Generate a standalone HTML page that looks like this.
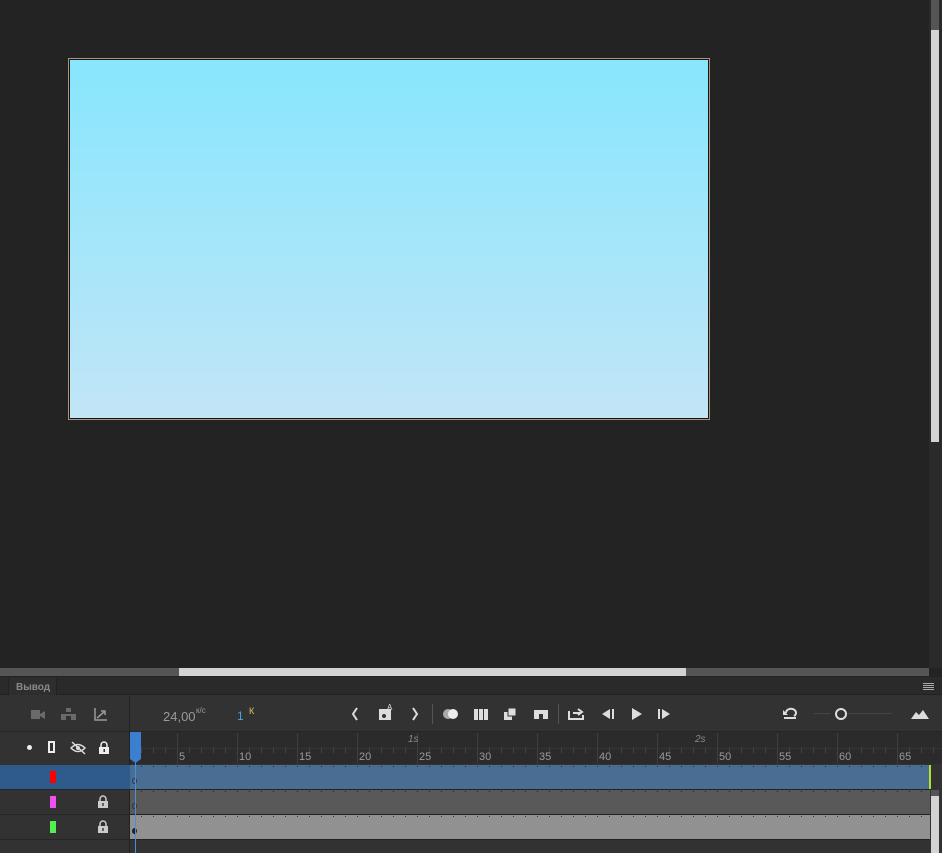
<!DOCTYPE html>
<html><head><meta charset="utf-8"><style>
*{margin:0;padding:0;box-sizing:border-box}
body{width:942px;height:853px;background:#232323;position:relative;overflow:hidden;font-family:"Liberation Sans","DejaVu Sans",sans-serif}
.a{position:absolute}
.lbl{position:absolute;top:751px;font-size:11px;color:#9a9a9a}
.ic{position:absolute}
</style></head><body>
<div class="a" style="left:68px;top:58px;width:642px;height:362px;border:1px solid #a89482;background:#1a1410"></div>
<div class="a" style="left:70px;top:60px;width:638px;height:358px;background:linear-gradient(#87e6fd,#c2e5f7)"></div>
<div class="a" style="left:929px;top:0;width:13px;height:668px;background:#2a2a2a"></div>
<div class="a" style="left:931px;top:0;width:8px;height:30px;background:#555"></div>
<div class="a" style="left:931px;top:30px;width:8px;height:412px;background:#d3d3d3"></div>
<div class="a" style="left:0;top:668px;width:929px;height:8px;background:#555"></div>
<div class="a" style="left:179px;top:668px;width:507px;height:8px;background:#d3d3d3"></div>
<div class="a" style="left:0;top:677px;width:942px;height:176px;background:#323232"></div>
<div class="a" style="left:0;top:677px;width:942px;height:18px;background:#2a2a2a;border-bottom:1px solid #222"></div>
<div class="a" style="left:8px;top:678px;width:49px;height:17px;background:#2e2e2e;border-left:1px solid #222;border-right:1px solid #222;font-size:10px;color:#8a8a8a;padding:4px 0 0 7px;font-weight:bold">Вывод</div>
<div class="a" style="left:923px;top:683px;width:11px;height:7px;background:repeating-linear-gradient(#aaa 0 1px,transparent 1px 2px)"></div>
<div class="a" style="left:129px;top:696px;width:1px;height:157px;background:#222"></div>
<div class="a" style="left:0;top:731px;width:942px;height:1px;background:#262626"></div>
<svg class="ic" style="left:28px;top:706px" width="90" height="18" viewBox="0 0 90 18">
<rect x="3" y="4" width="9" height="9" fill="#6a6a6a"/><path d="M12 8l5-3v8l-5-3z" fill="#6a6a6a"/>
<rect x="38" y="2" width="5" height="4" fill="#6a6a6a"/><rect x="33" y="8" width="15" height="2" fill="#6a6a6a"/><rect x="33" y="10" width="5" height="4" fill="#6a6a6a"/><rect x="43" y="10" width="5" height="4" fill="#6a6a6a"/>
<path d="M67 2v12h12" stroke="#9a9a9a" fill="none" stroke-width="1.5"/><path d="M69 12l7-6M73 5h4v4" stroke="#9a9a9a" fill="none" stroke-width="1.5"/>
</svg>
<div class="a" style="left:163px;top:709px;font-size:13px;color:#9a9a9a">24,00</div>
<div class="a" style="left:196px;top:706px;font-size:8px;color:#9a9a9a">к/с</div>
<div class="a" style="left:237px;top:709px;font-size:12px;color:#4ea0e0">1</div>
<div class="a" style="left:249px;top:706px;font-size:9px;color:#e8c15a">К</div>
<svg class="ic" style="left:340px;top:700px" width="600" height="28" viewBox="0 0 600 28">
<g stroke="#ddd" stroke-width="2" fill="none"><path d="M17 8l-4 6 4 6"/><path d="M73 8l4 6-4 6"/></g>
<rect x="39" y="9" width="12" height="11" fill="#ddd"/><circle cx="44" cy="16" r="2" fill="#333"/><text x="47" y="10" font-size="8" fill="#ddd" font-family="Liberation Sans">A</text>
<rect x="92" y="4" width="1" height="20" fill="#555"/>
<circle cx="108" cy="14" r="5" fill="#aaa"/><circle cx="113" cy="14" r="5" fill="#eee"/>
<rect x="134" y="9" width="4" height="11" fill="#ddd"/><rect x="139" y="9" width="4" height="11" fill="#ddd"/><rect x="144" y="9" width="4" height="11" fill="#ddd"/>
<rect x="164" y="12" width="8" height="8" fill="#ddd"/><rect x="168" y="8" width="8" height="8" fill="#ddd" stroke="#333"/>
<rect x="194" y="10" width="14" height="9" fill="#ddd"/><rect x="199" y="14" width="4" height="5" fill="#333"/>
<rect x="218" y="4" width="1" height="20" fill="#555"/>
<path d="M229 11v8h14v-4" stroke="#ddd" stroke-width="2" fill="none"/><path d="M233 13h8M238 9l4 3-4 3" stroke="#ddd" stroke-width="2" fill="none"/>
<path d="M270 9l-8 5 8 5z" fill="#ddd"/><rect x="272" y="9" width="2" height="10" fill="#ddd"/>
<path d="M292 8l10 6-10 6z" fill="#ddd"/>
<rect x="318" y="9" width="2" height="10" fill="#ddd"/><path d="M322 9l8 5-8 5z" fill="#ddd"/>
<path d="M444 18h12M446 13a5 4 0 1 1 8 3" stroke="#ddd" stroke-width="2" fill="none"/><path d="M443 10v5h5z" fill="#ddd"/>
<rect x="474" y="13" width="16" height="1" fill="#444"/><rect x="507" y="13" width="45" height="1" fill="#444"/>
<circle cx="501" cy="14" r="5" stroke="#ddd" stroke-width="2" fill="none"/>
<path d="M571 19l5-7 3 3 4-5 6 9z" fill="#ddd"/>
</svg>
<div class="a" style="left:27px;top:745px;width:5px;height:5px;border-radius:50%;background:#eee"></div>
<div class="a" style="left:48px;top:741px;width:7px;height:12px;border:2px solid #eee"></div>
<svg class="ic" style="left:70px;top:740px" width="44" height="16" viewBox="0 0 44 16">
<path d="M1 8q7-7 14 0q-7 7-14 0z" stroke="#ddd" stroke-width="1.5" fill="none"/><circle cx="8" cy="8" r="2" fill="#ddd"/><path d="M2 2l13 12" stroke="#ddd" stroke-width="1.5"/>
<path d="M31 7v-2a3 3 0 0 1 6 0v2" stroke="#eee" stroke-width="1.5" fill="none"/><rect x="29" y="7" width="10" height="7" fill="#eee"/><rect x="33.5" y="9" width="1.5" height="3" fill="#333"/>
</svg>
<div class="a" style="left:130px;top:732px;width:812px;height:32px;background:#2b2b2b"></div>
<div class="a" style="left:177px;top:733px;width:765px;height:31px;background:repeating-linear-gradient(90deg,#3e3e3e 0 1px,transparent 1px 60px)"></div>
<div class="a" style="left:141px;top:747px;width:801px;height:6px;background:repeating-linear-gradient(90deg,#444 0 1px,transparent 1px 12px)"></div>
<div class="a" style="left:130px;top:748px;width:812px;height:1px;background:#333"></div>
<div class="lbl" style="left:179px">5</div><div class="lbl" style="left:239px">10</div><div class="lbl" style="left:299px">15</div><div class="lbl" style="left:359px">20</div><div class="lbl" style="left:419px">25</div><div class="lbl" style="left:479px">30</div><div class="lbl" style="left:539px">35</div><div class="lbl" style="left:599px">40</div><div class="lbl" style="left:659px">45</div><div class="lbl" style="left:719px">50</div><div class="lbl" style="left:779px">55</div><div class="lbl" style="left:839px">60</div><div class="lbl" style="left:899px">65</div>
<div class="a" style="left:408px;top:734px;font-size:10px;font-style:italic;color:#888">1s</div>
<div class="a" style="left:695px;top:734px;font-size:10px;font-style:italic;color:#888">2s</div>
<div class="a" style="left:0;top:765px;width:130px;height:24px;background:#2e5b8c"></div>
<div class="a" style="left:130px;top:765px;width:800px;height:24px;background:#4a6d94"></div>
<div class="a" style="left:929px;top:765px;width:2px;height:24px;background:#b0e030"></div>
<div class="a" style="left:130px;top:789px;width:800px;height:1px;background:#222"></div>
<div class="a" style="left:130px;top:790px;width:800px;height:24px;background:#595959"></div>
<div class="a" style="left:130px;top:814px;width:800px;height:1px;background:#222"></div>
<div class="a" style="left:130px;top:815px;width:800px;height:24px;background:#919191"></div>
<div class="a" style="left:130px;top:839px;width:800px;height:1px;background:#222"></div>
<div class="a" style="left:0;top:789px;width:130px;height:1px;background:#262626"></div>
<div class="a" style="left:0;top:814px;width:130px;height:1px;background:#262626"></div>
<div class="a" style="left:0;top:839px;width:130px;height:1px;background:#262626"></div>
<div class="a" style="left:141px;top:766px;width:789px;height:1px;background:repeating-linear-gradient(90deg,#1e2e44 0 1px,transparent 1px 12px)"></div>
<div class="a" style="left:141px;top:791px;width:789px;height:1px;background:repeating-linear-gradient(90deg,#222 0 1px,transparent 1px 12px)"></div>
<div class="a" style="left:141px;top:816px;width:789px;height:1px;background:repeating-linear-gradient(90deg,#333 0 1px,transparent 1px 12px)"></div>
<div class="a" style="left:931px;top:790px;width:8px;height:63px;background:#555"></div>
<div class="a" style="left:931px;top:796px;width:8px;height:57px;background:#d3d3d3"></div>
<div class="a" style="left:50px;top:771px;width:6px;height:12px;background:#f00"></div>
<div class="a" style="left:50px;top:796px;width:6px;height:12px;background:#f050f0"></div>
<div class="a" style="left:50px;top:821px;width:6px;height:12px;background:#50f050"></div>
<svg class="ic" style="left:97px;top:795px" width="12" height="40" viewBox="0 0 12 40">
<g fill="#ccc"><path d="M3 6v-2a3 3 0 0 1 6 0v2" stroke="#ccc" stroke-width="1.5" fill="none"/><rect x="1" y="6" width="10" height="7"/><path d="M3 31v-2a3 3 0 0 1 6 0v2" stroke="#ccc" stroke-width="1.5" fill="none"/><rect x="1" y="31" width="10" height="7"/></g>
<rect x="5.3" y="8" width="1.4" height="3" fill="#333"/><rect x="5.3" y="33" width="1.4" height="3" fill="#333"/>
</svg>
<div class="a" style="left:132px;top:778px;width:5px;height:6px;border:1px solid #334;border-radius:50%"></div>
<div class="a" style="left:132px;top:803px;width:5px;height:6px;border:1px solid #333;border-radius:50%"></div>
<div class="a" style="left:132px;top:828px;width:5px;height:6px;background:#222;border-radius:50%"></div>
<div class="a" style="left:135px;top:760px;width:1px;height:93px;background:#4a90d9"></div>
<svg class="ic" style="left:130px;top:732px" width="12" height="32" viewBox="0 0 12 32"><path d="M0 0h11v27l-5.5 4l-5.5-4z" fill="#3b7fd0"/></svg>
</body></html>
